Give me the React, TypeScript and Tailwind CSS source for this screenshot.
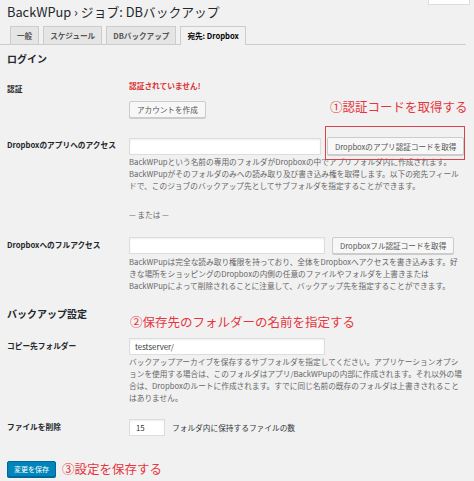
const jp = { fontFamily: '"Noto Sans CJK JP", "Noto Sans", sans-serif' };

const Btn = ({ children, className = "" }: { children: React.ReactNode; className?: string }) => (
  <button
    className={`h-[17px] rounded-[2px] border border-[#ccc] bg-[#f7f7f7] px-[7px] text-[7.6px] leading-[15px] text-[#555] shadow-[0_1px_0_#ccc] whitespace-nowrap ${className}`}
  >
    {children}
  </button>
);

const Input = ({ value = "", className = "" }: { value?: string; className?: string }) => (
  <div
    className={`h-[17px] border border-[#ddd] bg-white pl-[5px] text-[7.8px] leading-[15px] text-[#32373c] shadow-[inset_0_1px_2px_rgba(0,0,0,0.07)] ${className}`}
  >
    {value}
  </div>
);

const Desc = ({ lines, className = "" }: { lines: string[]; className?: string }) => (
  <div className={`text-[7.7px] leading-[12px] text-[#666] whitespace-nowrap ${className}`}>
    {lines.map((l, i) => (
      <div key={i}>{l}</div>
    ))}
  </div>
);

const Label = ({ children, className = "" }: { children: React.ReactNode; className?: string }) => (
  <div className={`w-[122px] shrink-0 text-[7.7px] font-bold leading-[12px] text-[#23282d] ${className}`}>{children}</div>
);

const tabs = ["一般", "スケジュール", "DBバックアップ"];

export default function App() {
  return (
    <div className="relative h-[481px] w-[474px] overflow-hidden bg-[#f1f1f1]" style={jp}>
      {/* screen options fragment */}
      <div className="absolute right-[4px] top-0 h-[5px] w-[42px] border-x border-b border-[#ddd] bg-white" />

      <h1 className="pl-[7px] text-[12.8px] leading-[24px] text-[#23282d]">BackWPup › ジョブ: DBバックアップ</h1>

      <div className="mr-[8px] mt-[2px] flex gap-[4px] border-b border-[#ccc] pl-[10px]">
        {tabs.map((t) => (
          <div
            key={t}
            className="h-[18px] border border-b-0 border-[#ccc] bg-[#e5e5e5] px-[6px] text-[7.6px] font-bold leading-[17px] text-[#555]"
          >
            {t}
          </div>
        ))}
        <div className="-mb-px h-[19px] border border-b-0 border-[#ccc] bg-[#f1f1f1] px-[6px] text-[7.6px] font-bold leading-[17px] text-black">
          宛先: Dropbox
        </div>
      </div>

      <div className="relative px-[7px]">
        <h2 className="mt-[8px] text-[10px] font-bold leading-[12px] text-[#23282d]">ログイン</h2>

        <div className="mt-[15px] flex">
          <Label className="pt-[3px]">認証</Label>
          <div>
            <div className="text-[7.7px] font-bold leading-[12px] text-[#dc3232]">認証されていません!</div>
            <Btn className="mt-[9px] h-[16px]">アカウントを作成</Btn>
          </div>
        </div>

        <div className="mt-[19px] flex">
          <Label className="pt-[2px]">Dropboxのアプリへのアクセス</Label>
          <div>
            <div className="flex items-center gap-[6px]">
              <Input className="w-[192px]" />
              <Btn className="h-[18px]">Dropboxのアプリ認証コードを取得</Btn>
            </div>
            <Desc
              className="mt-[1px]"
              lines={[
                "BackWPupという名前の専用のフォルダがDropboxの中でアプリフォルダ内に作成されます。",
                "BackWPupがそのフォルダのみへの読み取り及び書き込み権を取得します。以下の宛先フィール",
                "ドで、このジョブのバックアップ先としてサブフォルダを指定することができます。",
              ]}
            />
            <div className="mt-[17px] text-[7.6px] leading-[12px] text-[#666]">— または —</div>
          </div>
        </div>

        <div className="mt-[16px] flex">
          <Label className="pt-[2px]">Dropboxへのフルアクセス</Label>
          <div>
            <div className="flex items-center gap-[7px]">
              <Input className="w-[196px]" />
              <Btn>Dropboxフル認証コードを取得</Btn>
            </div>
            <Desc
              className="mt-[2px]"
              lines={[
                "BackWPupは完全な読み取り権限を持っており、全体をDropboxへアクセスを書き込みます。好",
                "きな場所をショッピングのDropboxの内側の任意のファイルやフォルダを上書きまたは",
                "BackWPupによって削除されることに注意して、バックアップ先を指定することができます。",
              ]}
            />
          </div>
        </div>

        <h3 className="mt-[15px] text-[10px] font-bold leading-[14px] text-[#23282d]">バックアップ設定</h3>

        <div className="mt-[17px] flex">
          <Label className="pt-[2px]">コピー先フォルダー</Label>
          <div>
            <Input className="w-[196px]" value="testserver/" />
            <Desc
              className="mt-[1px]"
              lines={[
                "バックアップアーカイブを保存するサブフォルダを指定してください。アプリケーションオプシ",
                "ョンを使用する場合は、このフォルダはアプリ/BackWPupの内部に作成されます。それ以外の場",
                "合は、Dropboxのルートに作成されます。すでに同じ名前の既存のフォルダは上書きされること",
                "はありません。",
              ]}
            />
          </div>
        </div>

        <div className="mt-[15px] flex">
          <Label className="pt-[2px]">ファイルを削除</Label>
          <div className="flex items-center">
            <Input className="w-[36px] pl-[6px]" value="15" />
            <span className="ml-[7px] text-[7.7px] leading-[12px] text-[#32373c]">フォルダ内に保持するファイルの数</span>
          </div>
        </div>

        <div className="mt-[25px] flex items-center">
          <button className="h-[16px] rounded-[2px] border border-[#006799] bg-[#0085ba] px-[6px] text-[7px] leading-[14px] text-white shadow-[0_1px_0_#006799]">
            変更を保存
          </button>
          <span className="ml-[6px] text-[12.5px] leading-[16px] text-[#e6353d]">③設定を保存する</span>
        </div>

        {/* annotations */}
        <div className="absolute left-[330px] top-[46px] text-[12.5px] leading-[16px] text-[#e6353d] whitespace-nowrap">
          ①認証コードを取得する
        </div>
        <div className="absolute left-[325px] top-[73px] h-[34px] w-[140px] border-[1.5px] border-[#d9434b]" />
        <div className="absolute left-[130px] top-[261px] text-[12.5px] leading-[16px] text-[#e6353d] whitespace-nowrap">
          ②保存先のフォルダーの名前を指定する
        </div>
      </div>
    </div>
  );
}
